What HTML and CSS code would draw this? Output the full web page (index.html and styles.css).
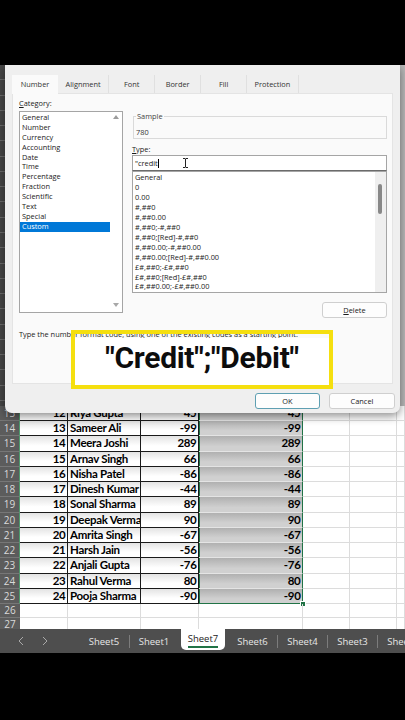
FILE: index.html
```html
<!DOCTYPE html>
<html lang="en">
  <head>
    <meta charset="UTF-8" />
    <meta name="viewport" content="width=device-width, initial-scale=1.0" />
    <title>Format Cells - Custom</title>
    <link rel="stylesheet" href="styles.css">
  </head>
  <body>
    <div class="screen">
      <div class="excel">
        <div class="sheet">
          <div class="sheet-hidden"></div>

          <div class="row sel"><span class="rh">13</span><span class="cell bd num">12</span><span class="cell bd">Riya Gupta</span><span class="cell bd num">45</span><span class="cell pick num">45</span><span class="cell"></span><span class="cell"></span><span class="cell"></span></div>
          <div class="row sel"><span class="rh">14</span><span class="cell bd num">13</span><span class="cell bd">Sameer Ali</span><span class="cell bd num">-99</span><span class="cell pick num">-99</span><span class="cell"></span><span class="cell"></span><span class="cell"></span></div>
          <div class="row sel"><span class="rh">15</span><span class="cell bd num">14</span><span class="cell bd">Meera Joshi</span><span class="cell bd num">289</span><span class="cell pick num">289</span><span class="cell"></span><span class="cell"></span><span class="cell"></span></div>
          <div class="row sel"><span class="rh">16</span><span class="cell bd num">15</span><span class="cell bd">Arnav Singh</span><span class="cell bd num">66</span><span class="cell pick num">66</span><span class="cell"></span><span class="cell"></span><span class="cell"></span></div>
          <div class="row sel"><span class="rh">17</span><span class="cell bd num">16</span><span class="cell bd">Nisha Patel</span><span class="cell bd num">-86</span><span class="cell pick num">-86</span><span class="cell"></span><span class="cell"></span><span class="cell"></span></div>
          <div class="row sel"><span class="rh">18</span><span class="cell bd num">17</span><span class="cell bd">Dinesh Kumar</span><span class="cell bd num">-44</span><span class="cell pick num">-44</span><span class="cell"></span><span class="cell"></span><span class="cell"></span></div>
          <div class="row sel"><span class="rh">19</span><span class="cell bd num">18</span><span class="cell bd">Sonal Sharma</span><span class="cell bd num">89</span><span class="cell pick num">89</span><span class="cell"></span><span class="cell"></span><span class="cell"></span></div>
          <div class="row sel"><span class="rh">20</span><span class="cell bd num">19</span><span class="cell bd">Deepak Verma</span><span class="cell bd num">90</span><span class="cell pick num">90</span><span class="cell"></span><span class="cell"></span><span class="cell"></span></div>
          <div class="row sel"><span class="rh">21</span><span class="cell bd num">20</span><span class="cell bd">Amrita Singh</span><span class="cell bd num">-67</span><span class="cell pick num">-67</span><span class="cell"></span><span class="cell"></span><span class="cell"></span></div>
          <div class="row sel"><span class="rh">22</span><span class="cell bd num">21</span><span class="cell bd">Harsh Jain</span><span class="cell bd num">-56</span><span class="cell pick num">-56</span><span class="cell"></span><span class="cell"></span><span class="cell"></span></div>
          <div class="row sel"><span class="rh">23</span><span class="cell bd num">22</span><span class="cell bd">Anjali Gupta</span><span class="cell bd num">-76</span><span class="cell pick num">-76</span><span class="cell"></span><span class="cell"></span><span class="cell"></span></div>
          <div class="row sel"><span class="rh">24</span><span class="cell bd num">23</span><span class="cell bd">Rahul Verma</span><span class="cell bd num">80</span><span class="cell pick num">80</span><span class="cell"></span><span class="cell"></span><span class="cell"></span></div>
          <div class="row sel last"><span class="rh">25</span><span class="cell bd num">24</span><span class="cell bd">Pooja Sharma</span><span class="cell bd num">-90</span><span class="cell pick num">-90</span><span class="cell"></span><span class="cell"></span><span class="cell"></span><i class="fill-handle"></i></div>
          <div class="row short"><span class="rh">26</span><span class="cell"></span><span class="cell"></span><span class="cell"></span><span class="cell"></span><span class="cell"></span><span class="cell"></span><span class="cell"></span></div>
          <div class="row short"><span class="rh">27</span><span class="cell"></span><span class="cell"></span><span class="cell"></span><span class="cell"></span><span class="cell"></span><span class="cell"></span><span class="cell"></span></div>
        </div>

        <div class="sheet-tabs">
          <span class="tab-arrow">
            <svg width="6" height="10" viewBox="0 0 6 10"><path d="M5 1L1 5l4 4" fill="none" stroke="#a9a9a9" stroke-width="1"/></svg>
          </span>
          <span class="tab-arrow">
            <svg width="6" height="10" viewBox="0 0 6 10"><path d="M1 1l4 4-4 4" fill="none" stroke="#a9a9a9" stroke-width="1"/></svg>
          </span>
          <div class="tab-list">
            <span class="sheet-tab">Sheet5</span>
            <i class="tab-sep"></i>
            <span class="sheet-tab">Sheet1</span>
            <span class="sheet-tab active"><b>Sheet7</b></span>
            <span class="sheet-tab">Sheet6</span>
            <i class="tab-sep"></i>
            <span class="sheet-tab">Sheet4</span>
            <i class="tab-sep"></i>
            <span class="sheet-tab">Sheet3</span>
            <i class="tab-sep"></i>
            <span class="sheet-tab">Sheet2</span>
          </div>
        </div>

        <!-- Format Cells dialog sits over the sheet -->
        <div class="format-dialog">
          <div class="dlg-tabs">
            <span class="dlg-tab active">Number</span>
            <span class="dlg-tab">Alignment</span>
            <span class="dlg-tab">Font</span>
            <span class="dlg-tab">Border</span>
            <span class="dlg-tab">Fill</span>
            <span class="dlg-tab">Protection</span>
          </div>

          <div class="dlg-panel">
            <div class="dlg-cols">
              <div class="category">
                <label class="field-label"><u>C</u>ategory:</label>
                <div class="listbox category-list">
                  <ul>
                    <li>General</li>
                    <li>Number</li>
                    <li>Currency</li>
                    <li>Accounting</li>
                    <li>Date</li>
                    <li>Time</li>
                    <li>Percentage</li>
                    <li>Fraction</li>
                    <li>Scientific</li>
                    <li>Text</li>
                    <li>Special</li>
                    <li class="selected">Custom</li>
                  </ul>
                  <div class="list-arrows">
                    <svg width="6" height="4" viewBox="0 0 6 4"><path d="M0 4L3 0l3 4z" fill="#9c9c9c"/></svg>
                    <svg width="6" height="4" viewBox="0 0 6 4"><path d="M0 0l3 4 3-4z" fill="#a8a8a8"/></svg>
                  </div>
                </div>
              </div>

              <div class="type-side">
                <fieldset class="sample">
                  <legend>Sample</legend>
                  <div>780</div>
                </fieldset>

                <label class="field-label type-label"><u>T</u>ype:</label>
                <div class="type-input">
                  &quot;credit<span class="caret"></span>
                  <svg class="ibeam" width="5" height="10" viewBox="0 0 5 10"><path d="M0 .5h2m1 0h2M2.5 .5v9M0 9.5h2m1 0h2" fill="none" stroke="#222" stroke-width="1"/></svg>
                </div>
                <div class="listbox type-list">
                  <ul>
                    <li>General</li>
                    <li>0</li>
                    <li>0.00</li>
                    <li>#,##0</li>
                    <li>#,##0.00</li>
                    <li>#,##0;-#,##0</li>
                    <li>#,##0;[Red]-#,##0</li>
                    <li>#,##0.00;-#,##0.00</li>
                    <li>#,##0.00;[Red]-#,##0.00</li>
                    <li>£#,##0;-£#,##0</li>
                    <li>£#,##0;[Red]-£#,##0</li>
                    <li>£#,##0.00;-£#,##0.00</li>
                    <li>£#,##0.00;[Red]-£#,##0.00</li>
                  </ul>
                  <div class="vscroll"><div class="thumb"></div></div>
                </div>
                <div class="delete-row">
                  <button class="dlg-btn"><u>D</u>elete</button>
                </div>
              </div>
            </div>
            <p class="hint">Type the number format code, using one of the existing codes as a starting point.</p>
          </div>

          <div class="dlg-footer">
            <button class="dlg-btn ok">OK</button>
            <button class="dlg-btn cancel">Cancel</button>
          </div>

          <div class="callout">"Credit";"Debit"</div>
        </div>
      </div>
    </div>
  </body>
</html>
```

FILE: styles.css
```css
* {
  box-sizing: border-box;
}
body {
  margin: 0;
  background: #000;
  font-family: "Open Sans", "Noto Sans", sans-serif;
}
.screen {
  width: 405px;
  height: 720px;
  padding-top: 65px;
  overflow: hidden;
}
.excel {
  position: relative;
  height: 588px;
  display: flex;
  flex-direction: column;
}

/* sheet grid */
.sheet {
  flex: 1;
  overflow: hidden;
  background: #fff;
}
.sheet-hidden {
  height: 340.8px;
  background:
    repeating-linear-gradient(#464646 0 14.27px, #6a6a6a 14.27px 15.27px)
      left top / 20px 100% no-repeat,
    #b8b8b8;
}
.row {
  position: relative;
  display: grid;
  grid-template-columns: 20px 48px 73px 58px 104px 47px 47px 1fr;
  height: 15.27px;
}
.row.short {
  height: 14px;
}
.rh {
  background: #5c5c5c;
  color: #dadada;
  font-size: 10px;
  line-height: 14px;
  text-align: center;
  border-bottom: 1px solid #777;
}
.row.short .rh {
  line-height: 13px;
}
.row.sel .rh {
  border-right: 1px solid #4f9a6d;
}
.cell {
  padding: 0 1.5px 0 2px;
  border-right: 1px solid #dcdcdc;
  border-bottom: 1px solid #dcdcdc;
  font: 700 11.5px Lato, sans-serif;
  letter-spacing: -0.3px;
  line-height: 14px;
  color: #000;
  white-space: nowrap;
  overflow: hidden;
}
.cell.num {
  text-align: right;
}
.cell.bd {
  border-color: #1a1a1a;
  background: linear-gradient(#e3e3e3, #fff 65%);
}
.cell.pick {
  background: linear-gradient(#b0b0b0, #d0d0d0 70%);
  border-bottom-color: #e4e4e4;
  border-right-color: #217346;
  box-shadow: inset 1px 0 #217346;
}
.row.last .cell.pick {
  border-bottom-color: #217346;
}
.fill-handle {
  position: absolute;
  left: 300px;
  bottom: -3px;
  width: 6px;
  height: 6px;
  background: #217346;
  border: 1px solid #fff;
}

/* sheet tabs */
.sheet-tabs {
  height: 24px;
  flex: none;
  display: flex;
  align-items: flex-start;
  padding-left: 9px;
  background: #4e4e4e;
  color: #e6e6e6;
  font-size: 9.5px;
  overflow: hidden;
}
.tab-arrow {
  flex: none;
  width: 24px;
  height: 24px;
  display: flex;
  align-items: center;
  justify-content: center;
}
.tab-list {
  flex: none;
  display: flex;
  margin-left: 22.5px;
}
.sheet-tab {
  flex: none;
  width: 49px;
  height: 21px;
  padding-top: 6.5px;
  line-height: 12px;
  text-align: center;
  white-space: nowrap;
}
.sheet-tab.active {
  width: 44px;
  margin: 0 3px 0 2.5px;
  padding-top: 4px;
  background: #fff;
  color: #222;
  border-radius: 0 0 5px 5px;
}
.sheet-tab.active b {
  display: inline-block;
  font-weight: 400;
  padding-bottom: 1px;
  border-bottom: 2px solid #217346;
}
.tab-sep {
  flex: none;
  width: 1px;
  height: 13px;
  margin-top: 6px;
  background: #7c7c7c;
}

/* dialog */
.format-dialog {
  position: absolute;
  left: 5px;
  top: 0;
  width: 395px;
  height: 348px;
  padding: 10px 7px 0;
  background: #efefef;
  border-radius: 0 0 7px 7px;
  box-shadow: 0 3px 10px rgba(0, 0, 0, 0.45);
  font-size: 7.4px;
  color: #1b1b1b;
}
.dlg-tabs {
  position: relative;
  z-index: 1;
  display: flex;
  align-items: flex-start;
  height: 18px;
}
.dlg-tab {
  min-width: 46px;
  height: 18px;
  padding: 0 7.5px;
  line-height: 18px;
  text-align: center;
  color: #333;
  border-right: 1px solid #e0e0e0;
}
.dlg-tab.active {
  height: 19px;
  background: #fafafa;
  border-right: 0;
}
.dlg-panel {
  height: 291px;
  padding: 4px 5px 0 6px;
  background: #fafafa;
  border: 1px solid #e4e4e4;
}
.dlg-cols {
  display: flex;
  gap: 9px;
}
.category {
  width: 104px;
}
.field-label {
  display: block;
  line-height: 10px;
  margin-bottom: 2.7px;
}
.listbox {
  display: flex;
  background: #fff;
  border: 1px solid #a5a5a5;
  overflow: hidden;
}
.listbox ul {
  flex: 1;
  margin: 0;
  padding: 1px 0 0;
  list-style: none;
  overflow: hidden;
}
.listbox li {
  padding-left: 2px;
  line-height: 9.95px;
  white-space: nowrap;
}
.listbox li.selected {
  background: #0078d7;
  color: #fff;
}
.category-list {
  height: 202px;
}
.list-arrows {
  width: 12px;
  display: flex;
  flex-direction: column;
  justify-content: space-between;
  align-items: center;
  padding: 3.5px 0 4.5px;
}
.type-side {
  width: 255px;
}
.sample {
  margin: 13px 0 0 1px;
  padding: 6px 2px 1px;
  border: 1px solid #dadada;
}
.sample legend {
  padding: 0 1px;
  line-height: 10px;
  color: #444;
}
.sample div {
  line-height: 10px;
  color: #333;
}
.type-label {
  margin: 5px 0 1px;
}
.type-input {
  position: relative;
  height: 16px;
  padding-left: 2px;
  line-height: 14px;
  background: #fff;
  border: 1px solid #a5a5a5;
  border-bottom-color: #6b6b6b;
}
.caret {
  display: inline-block;
  width: 1px;
  height: 9px;
  margin-left: 0.5px;
  background: #000;
  vertical-align: -1.5px;
}
.ibeam {
  position: absolute;
  left: 50px;
  top: 1.5px;
}
.type-list {
  height: 122px;
}
.vscroll {
  width: 11px;
  padding: 12px 0 0 3px;
  background: #efefef;
}
.thumb {
  width: 4px;
  height: 30px;
  background: #888;
  border-radius: 2px;
}
.delete-row {
  display: flex;
  justify-content: flex-end;
  margin-top: 9px;
}
.dlg-btn {
  width: 65px;
  height: 16px;
  padding: 0;
  font: inherit;
  color: #1b1b1b;
  background: #fdfdfd;
  border: 1px solid #cfcfcf;
  border-radius: 3px;
}
.dlg-btn.ok {
  border-color: #5e9fb2;
}
.dlg-btn.cancel {
  width: 66px;
}
.hint {
  margin: 11px 0 0;
  line-height: 10px;
  white-space: nowrap;
}
.dlg-footer {
  display: flex;
  justify-content: flex-end;
  gap: 9px;
  margin: 9px -2px 0 0;
}

/* yellow callout pasted over the dialog */
.callout {
  position: absolute;
  left: 66px;
  top: 265px;
  width: 262px;
  height: 59px;
  display: flex;
  align-items: center;
  justify-content: center;
  padding-bottom: 4px;
  border: 4px solid #f5df0f;
  background: linear-gradient(transparent 4px, #fff 4px);
  font: 700 30px Roboto, sans-serif;
  letter-spacing: -0.3px;
  color: #0d0d0d;
}
```
